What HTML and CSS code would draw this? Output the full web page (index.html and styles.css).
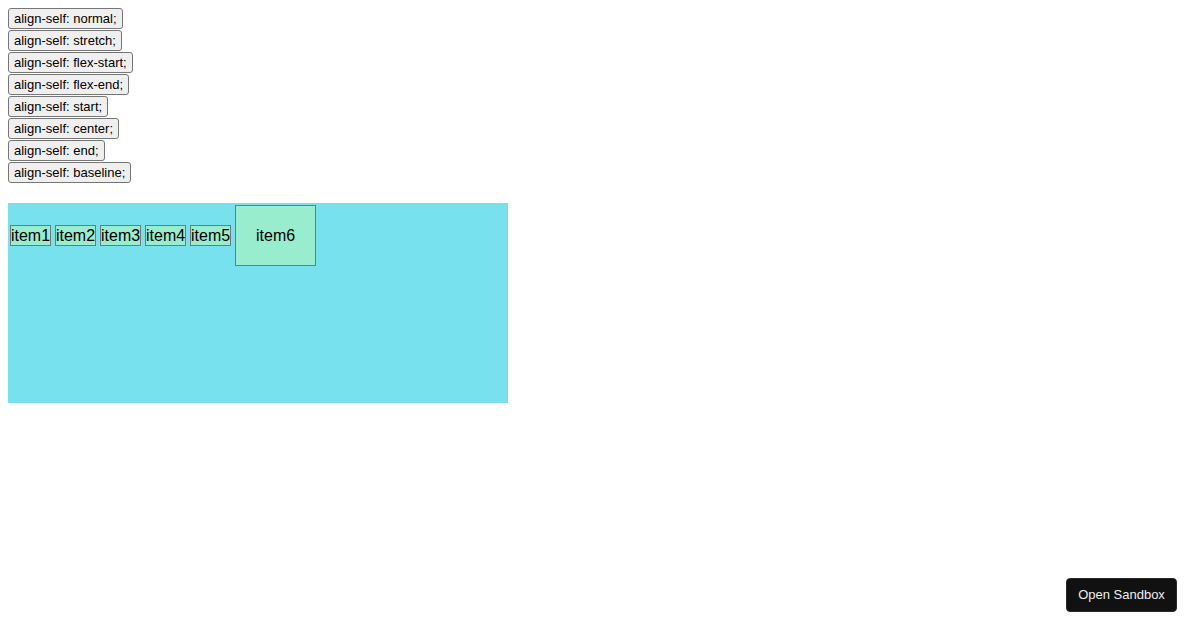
FILE: index.html
```html
<!DOCTYPE html>
<html>
<head>
<meta charset="utf-8">
<link rel="stylesheet" href="styles.css">
</head>
<body>
<div class="controls">
  <button class="ctl">align-self: normal;</button>
  <button class="ctl">align-self: stretch;</button>
  <button class="ctl">align-self: flex-start;</button>
  <button class="ctl">align-self: flex-end;</button>
  <button class="ctl">align-self: start;</button>
  <button class="ctl">align-self: center;</button>
  <button class="ctl">align-self: end;</button>
  <button class="ctl">align-self: baseline;</button>
</div>
<div class="container">
  <div class="item">item1</div>
  <div class="item">item2</div>
  <div class="item">item3</div>
  <div class="item">item4</div>
  <div class="item">item5</div>
  <div class="item big">item6</div>
</div>
<button class="sandbox">Open Sandbox</button>
</body>
</html>
```
FILE: styles.css
```css
html, body {
  margin: 0;
  padding: 0;
  background: #ffffff;
}
body {
  padding: 8px;
  font-family: "Liberation Sans", Arial, sans-serif;
  color: #000;
}
.controls {
  display: flex;
  flex-direction: column;
  align-items: flex-start;
}
.ctl {
  box-sizing: border-box;
  height: 21px;
  margin: 0 0 1px 0;
  padding: 0 5px;
  font-family: "Liberation Sans", Arial, sans-serif;
  font-size: 13px;
  line-height: 19px;
  color: #000;
  background: #efefef;
  border: 1px solid #767676;
  border-radius: 3px;
}
.container {
  margin-top: 19px;
  width: 500px;
  height: 200px;
  background: #77e1ee;
  display: flex;
  align-items: flex-start;
}
.item {
  margin: 22px 2px 2px 2px;
  background: #98edce;
  border: 1px solid #777777;
  font-size: 15.96px;
  line-height: 19px;
}
.item.big {
  margin-top: 2px;
  box-sizing: border-box;
  width: 81px;
  height: 61px;
  display: flex;
  align-items: center;
  justify-content: center;
}
.sandbox {
  position: fixed;
  right: 23px;
  bottom: 18px;
  box-sizing: border-box;
  width: 111px;
  height: 34px;
  padding: 0 0 1px 0;
  background: #111111;
  color: #eeeeee;
  border: 1px solid #2a2a2a;
  border-radius: 4px;
  font-family: "Liberation Sans", Arial, sans-serif;
  font-size: 13px;
}
```
